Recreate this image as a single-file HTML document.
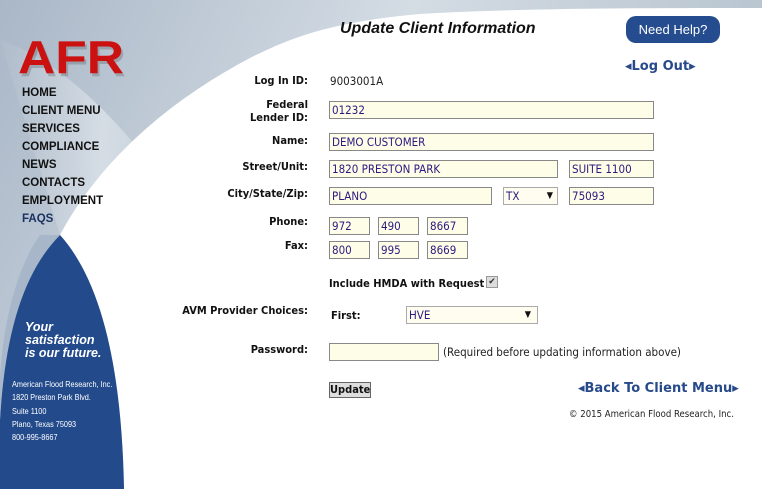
<!DOCTYPE html>
<html><head><meta charset="utf-8"><style>
body{margin:0;width:762px;height:489px;position:relative;overflow:hidden;font-family:Tahoma,"DejaVu Sans",sans-serif;background:#fff}
.a{position:absolute;white-space:nowrap}
.nav{font-family:"Liberation Sans",Arial,sans-serif;font-weight:bold;font-size:11.5px;color:#111;left:22px}
.lb{font-weight:bold;font-size:11px;color:#111;text-align:right;font-family:"DejaVu Sans Condensed","DejaVu Sans",sans-serif}
.in{position:absolute;height:16px;border:1px solid #888;background:#fefde8;font-size:11.5px;color:#2a1a80;line-height:16px;padding-left:2px;box-sizing:content-box;font-family:"DejaVu Sans Condensed","DejaVu Sans",sans-serif}
.sm{font-family:"Liberation Sans",Arial,sans-serif;color:#fff;font-size:8.5px;left:12px;transform:scaleX(0.86);transform-origin:left}
.lnk{color:#274a8a;font-weight:bold;font-family:"DejaVu Sans",sans-serif}
</style></head><body>
<svg class="a" style="left:0;top:0" width="762" height="489">
<defs>
<linearGradient id="g" x1="0" y1="0" x2="1" y2="0.3"><stop offset="0" stop-color="#a9b7c7"/><stop offset="0.5" stop-color="#d4dce4"/><stop offset="1" stop-color="#b4c1cc"/></linearGradient>
<linearGradient id="g2" x1="0" y1="0" x2="1" y2="0"><stop offset="0" stop-color="#b0bdcb"/><stop offset="0.6" stop-color="#e6ebf0"/><stop offset="1" stop-color="#c8d2dc"/></linearGradient>
</defs>
<rect width="762" height="489" fill="url(#g)"/>
<path d="M0 40 C60 60 120 120 170 190 L60 235 Z" fill="url(#g2)" opacity="0.6"/>
<path d="M762 8 L762 489 L124 489 C122 380 105 285 60 235 C100 160 170 100 250 58 C290 38 330 22 420 14 C520 8 650 8 762 8 Z" fill="#fff"/>
<path d="M60 235 C105 285 122 380 124 489 L0 489 L0 420 C5 330 25 270 60 235 Z" fill="#234b8c"/>
<path d="M0 420 C5 330 25 270 60 235 L40 235 C15 270 2 330 0 380 Z" fill="#9fb0c4" opacity="0.7"/>
<text x="20" y="76" font-family="Liberation Sans" font-weight="bold" font-size="46" fill="#555" opacity="0.3" textLength="106" lengthAdjust="spacingAndGlyphs">AFR</text>
<text x="18" y="73" font-family="Liberation Sans" font-weight="bold" font-size="46" fill="#cc1111" textLength="106" lengthAdjust="spacingAndGlyphs">AFR</text>
</svg>
<div class="a nav" style="top:87px">HOME</div>
<div class="a nav" style="top:105px">CLIENT MENU</div>
<div class="a nav" style="top:123px">SERVICES</div>
<div class="a nav" style="top:141px">COMPLIANCE</div>
<div class="a nav" style="top:159px">NEWS</div>
<div class="a nav" style="top:177px">CONTACTS</div>
<div class="a nav" style="top:195px">EMPLOYMENT</div>
<div class="a nav" style="top:213px;color:#1b3160">FAQS</div>
<div class="a" style="left:25px;top:321px;color:#fff;font:italic bold 12.5px/13px 'Liberation Sans',sans-serif">Your<br>satisfaction<br>is our future.</div>
<div class="a sm" style="top:379px">American Flood Research, Inc.</div>
<div class="a sm" style="top:392px">1820 Preston Park Blvd.</div>
<div class="a sm" style="top:406px">Suite 1100</div>
<div class="a sm" style="top:419px">Plano, Texas 75093</div>
<div class="a sm" style="top:432px">800-995-8667</div>
<div class="a" style="left:340px;top:20px;font:italic bold 16px 'Liberation Sans',sans-serif;color:#111">Update Client Information</div>
<div class="a" style="left:626px;top:16px;width:94px;height:27px;background:#244c8e;border-radius:10px;color:#fff;font:13px/27px 'Liberation Sans',sans-serif;text-align:center">Need Help?</div>
<div class="a lnk" style="left:625px;top:59px;font-size:13px">◂Log Out▸</div>
<div class="a lb" style="left:250px;top:74px;width:58px">Log In ID:</div>
<div class="a" style="left:330px;top:74px;font-size:11.5px;color:#222;font-family:'DejaVu Sans Condensed',sans-serif">9003001A</div>
<div class="a lb" style="left:230px;top:98px;width:78px;line-height:13px">Federal<br>Lender ID:</div>
<div class="in" style="left:329px;top:101px;width:321px">01232</div>
<div class="a lb" style="left:250px;top:134px;width:58px">Name:</div>
<div class="in" style="left:329px;top:133px;width:321px">DEMO CUSTOMER</div>
<div class="a lb" style="left:200px;top:160px;width:108px">Street/Unit:</div>
<div class="in" style="left:329px;top:160px;width:225px">1820 PRESTON PARK</div>
<div class="in" style="left:569px;top:160px;width:81px">SUITE 1100</div>
<div class="a lb" style="left:200px;top:187px;width:108px">City/State/Zip:</div>
<div class="in" style="left:329px;top:187px;width:159px">PLANO</div>
<div class="in" style="left:503px;top:187px;width:51px;background:#fefdf0;border-color:#aaa">TX<span style="position:absolute;right:4px;font-size:9px;color:#111">▼</span></div>
<div class="in" style="left:569px;top:187px;width:81px">75093</div>
<div class="a lb" style="left:250px;top:215px;width:58px">Phone:</div>
<div class="in" style="left:329px;top:217px;width:37px">972</div>
<div class="in" style="left:378px;top:217px;width:37px">490</div>
<div class="in" style="left:427px;top:217px;width:37px">8667</div>
<div class="a lb" style="left:250px;top:239px;width:58px">Fax:</div>
<div class="in" style="left:329px;top:241px;width:37px">800</div>
<div class="in" style="left:378px;top:241px;width:37px">995</div>
<div class="in" style="left:427px;top:241px;width:37px">8669</div>
<div class="a lb" style="left:329px;top:277px;text-align:left">Include HMDA with Request</div>
<div class="a" style="left:486px;top:276px;width:10px;height:10px;border:1px solid #999;background:#ddd;font-size:9px;line-height:10px;text-align:center;color:#333">✔</div>
<div class="a lb" style="left:160px;top:304px;width:148px">AVM Provider Choices:</div>
<div class="a lb" style="left:331px;top:309px;text-align:left">First:</div>
<div class="in" style="left:406px;top:306px;width:128px;background:#fefdf0;border-color:#aaa">HVE<span style="position:absolute;right:6px;font-size:9px;color:#111">▼</span></div>
<div class="a lb" style="left:240px;top:343px;width:68px">Password:</div>
<div class="in" style="left:329px;top:343px;width:106px"></div>
<div class="a" style="left:443px;top:345px;font-size:11.5px;color:#222;font-family:'DejaVu Sans Condensed',sans-serif">(Required before updating information above)</div>
<div class="a lb" style="left:329px;top:382px;width:40px;height:14px;border:1px solid #666;background:#ddd;text-align:center;line-height:14px">Update</div>
<div class="a lnk" style="left:578px;top:381px;font-size:13px">◂Back To Client Menu▸</div>
<div class="a" style="left:569px;top:409px;font-size:9.5px;color:#222;font-family:'DejaVu Sans Condensed',sans-serif">© 2015 American Flood Research, Inc.</div>
</body></html>
